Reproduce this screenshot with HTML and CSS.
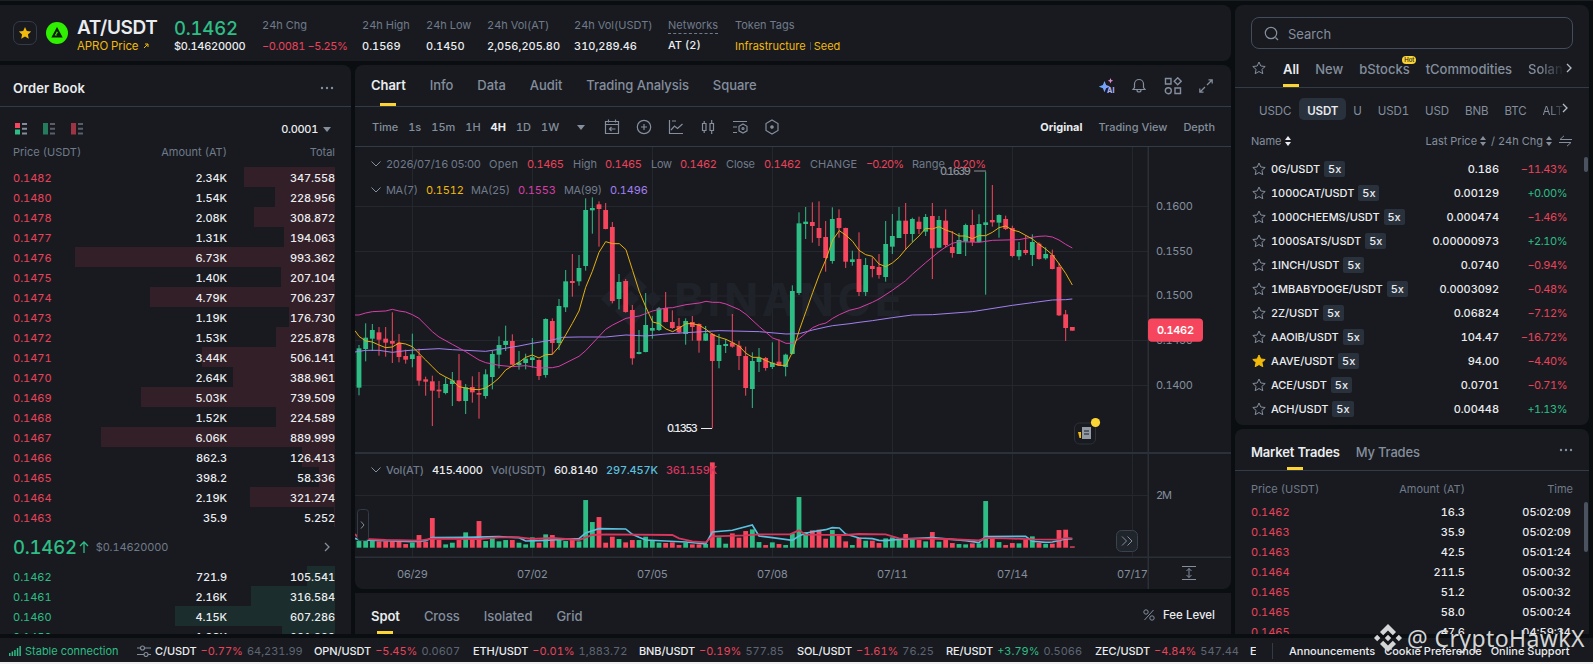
FILE: index.html
```html
<!DOCTYPE html>
<html lang="en">
<head>
    <meta charset="UTF-8">
    <meta name="viewport" content="width=device-width, initial-scale=1.0">
    <title>AT/USDT</title>
    <link rel="stylesheet" href="styles.css">
</head>
<body>

    <!-- Shared icons -->
    <svg class="sprite">
        <symbol id="star" viewBox="0 0 14 14">
            <path d="M7 1l1.8 4 4.4.5-3.3 2.9.9 4.3L7 10.500l-3.800 2.200.9-4.300L.8 5.500 5.200 5z"/>
        </symbol>
        <symbol id="sort" viewBox="0 0 6 10">
            <path d="M3 0L6 4H0zM3 10L0 6h6z"/>
        </symbol>
        <symbol id="right" viewBox="0 0 6 10">
            <path d="M1 1l4 4-4 4" fill="none" stroke="currentColor" stroke-width="1.3"/>
        </symbol>
    </svg>

    <main class="page">
        <div class="left">
            <header class="panel header">
                <div class="fav"><svg width="14" height="14"><use href="#star"/></svg></div>
                <svg class="coin" width="22" height="22" viewBox="0 0 22 22">
                    <circle cx="11" cy="11" r="11" fill="#2ff000"/>
                    <path d="M11 7l4 7.500H7z" fill="none" stroke="#0b1a05" stroke-width="2"/>
                    <circle cx="12" cy="12.500" r="1.500" fill="#0b1a05"/>
                </svg>
                <div class="pair">
                    <h1>AT/USDT</h1>
                    <a>APRO Price <svg width="6" height="6" viewBox="0 0 6 6"><path d="M1 5l4-4M2 1h3v3" fill="none" stroke="#f0b90b"/></svg></a>
                </div>
                <div class="stats">
                    <div><b class="big">0.1462</b><span class="usd">$0.14620000</span></div>
                    <div><i>24h Chg</i><span class="red thin">−0.0081 −5.25%</span></div>
                    <div><i>24h High</i><span>0.1569</span></div>
                    <div><i>24h Low</i><span>0.1450</span></div>
                    <div><i>24h Vol(AT)</i><span>2,056,205.80</span></div>
                    <div><i>24h Vol(USDT)</i><span>310,289.46</span></div>
                    <div><i class="dashed">Networks</i><span class="net">AT (2)</span></div>
                    <div><i>Token Tags</i><span class="tags">Infrastructure<em></em>Seed</span></div>
                </div>
            </header>

            <div class="row">
                <section class="panel book">
                    <div class="book-head">
                        <h2>Order Book</h2>
                        <svg width="14" height="4" viewBox="0 0 14 4" fill="#848e9c"><circle cx="2" cy="2" r="1.200"/><circle cx="7" cy="2" r="1.200"/><circle cx="12" cy="2" r="1.200"/></svg>
                    </div>
                    <div class="book-tools">
                        <svg width="12" height="12" viewBox="0 0 12 12"><path d="M0 0h5v5H0z" fill="#f6465d"/><path d="M0 6.500h5v5H0z" fill="#2ebd85"/><path d="M7 0h5v2H7zM7 4.800h5v2H7zM7 9.500h5v2H7z" fill="#848e9c"/></svg>
                        <svg width="12" height="12" viewBox="0 0 12 12" opacity=".6"><path d="M0 0h5v11.500H0z" fill="#2ebd85"/><path d="M7 0h5v2H7zM7 4.800h5v2H7zM7 9.500h5v2H7z" fill="#848e9c"/></svg>
                        <svg width="12" height="12" viewBox="0 0 12 12" opacity=".6"><path d="M0 0h5v11.500H0z" fill="#f6465d"/><path d="M7 0h5v2H7zM7 4.800h5v2H7zM7 9.500h5v2H7z" fill="#848e9c"/></svg>
                        <span class="step">0.0001</span>
                        <svg width="8" height="5" viewBox="0 0 8 5"><path d="M0 0h8L4 5z" fill="#848e9c"/></svg>
                    </div>
                    <div class="book-cols"><span>Price (USDT)</span><span>Amount (AT)</span><span>Total</span></div>
                    <div id="asks"></div>
                    <div class="last">
                        <b>0.1462</b>
                        <svg width="10" height="12" viewBox="0 0 10 12"><path d="M5 12V1M1 5l4-4 4 4" fill="none" stroke="#2ebd85" stroke-width="1.300"/></svg>
                        <span>$0.14620000</span>
                        <svg class="go" width="6" height="10"><use href="#right"/></svg>
                    </div>
                    <div id="bids"></div>
                </section>

                <div class="center">
                    <section class="panel chart">
                        <nav class="tabs chart-tabs">
                            <a class="on">Chart</a><a>Info</a><a>Data</a><a>Audit</a><a>Trading Analysis</a><a>Square</a>
                            <div class="tab-icons">
                                <svg width="16" height="16" viewBox="0 0 16 16">
                                    <defs><linearGradient id="ai" x2="1" y2="0"><stop offset="0" stop-color="#55a9ff"/><stop offset="1" stop-color="#9a9cf5"/></linearGradient></defs>
                                    <path d="M5.500 3l1.600 4 4 1.600-4 1.600-1.600 4-1.600-4-4-1.600 4-1.600z" fill="url(#ai)"/>
                                    <path d="M11.500 0l.8 2 2 .8-2 .8-.8 2-.8-2-2-.8 2-.8z" fill="#e08bd0"/>
                                    <text x="8" y="15" font-size="7" font-weight="800" fill="#a9b0f5">AI</text>
                                </svg>
                                <svg width="14" height="16" viewBox="0 0 14 16" fill="none" stroke="#848e9c" stroke-width="1.200"><path d="M1 11.500h12l-1.500-2V6a4.500 4.500 0 0 0-9 0v3.500zM5 12a2 2 0 0 0 4 0"/></svg>
                                <svg width="18" height="18" viewBox="0 0 18 18" fill="none" stroke="#848e9c" stroke-width="1.400"><path d="M1.500 1.500h5.500V7H1.500zM11 11h5.500v5.500H11zM13.700.8l3.500 3.500-3.500 3.500-3.500-3.500z"/><circle cx="4.300" cy="13.700" r="3"/></svg>
                                <svg width="14" height="14" viewBox="0 0 14 14" fill="none" stroke="#848e9c" stroke-width="1.200" stroke-dasharray="none"><path d="M8 6l5-5M9.500.8h3.700v3.700M6 8l-5 5M4.500 13.200H.8V9.500"/></svg>
                            </div>
                        </nav>
                        <div class="toolbar">
                            <span>Time</span><span>1s</span><span>15m</span><span>1H</span><span class="on">4H</span><span>1D</span><span>1W</span>
                            <svg class="caret" width="8" height="5" viewBox="0 0 8 5"><path d="M0 0h8L4 5z" fill="#848e9c"/></svg>
                            <div class="tools">
                                <svg width="16" height="16" viewBox="0 0 16 16"><path d="M1.500 2.500h13v12h-13zM1.500 5.500h13M4.500.5v3M11.500.5v3M11.500 10h-6M7.500 8l-2 2 2 2"/></svg>
                                <svg width="16" height="16" viewBox="0 0 16 16"><circle cx="8" cy="8" r="6.700"/><path d="M8 5v6M5 8h6"/></svg>
                                <svg width="16" height="16" viewBox="0 0 16 16"><path d="M1.500 1v13.500H15M3 11l3.500-4 3 2.500L14.500 5M4 2h4"/></svg>
                                <svg width="16" height="16" viewBox="0 0 16 16"><path d="M2.500 4.500h3.500v7H2.500zM10 4.500h3.500v7H10zM4.200 2v2.500M4.200 11.500V14M11.700 1v3.500M11.700 11.500V15"/></svg>
                                <svg width="16" height="16" viewBox="0 0 16 16"><path d="M1 2.500h14M1 8h4M1 13.500h4M11 5l4 2.300v4.500L11 14l-4-2.200V7.300z"/><circle cx="11" cy="9.500" r="1"/></svg>
                                <svg width="16" height="16" viewBox="0 0 16 16"><path d="M8 1l6 3.500v7L8 15l-6-3.500v-7z"/><circle cx="8" cy="8" r="1.200" fill="#848e9c"/></svg>
                            </div>
                            <span class="on view">Original</span><span class="view">Trading View</span><span class="view">Depth</span>
                        </div>
                        <svg id="plot" width="876" height="442" viewBox="355 147 876 442"></svg>
                    </section>

                    <section class="panel order">
                        <nav class="tabs">
                            <a class="on">Spot</a><a>Cross</a><a>Isolated</a><a>Grid</a>
                            <div class="fee">
                                <svg width="12" height="12" viewBox="0 0 12 12" fill="none" stroke="#848e9c"><circle cx="3" cy="3" r="2.200"/><circle cx="9" cy="9" r="2.200"/><path d="M10.500 1l-9 10"/></svg>
                                <span>Fee Level</span>
                            </div>
                        </nav>
                    </section>
                </div>
            </div>
        </div>

        <aside class="right">
            <section class="panel market">
                <div class="search">
                    <svg width="16" height="16" viewBox="0 0 16 16" fill="none" stroke="#848e9c" stroke-width="1.200"><circle cx="7" cy="7" r="5.700"/><path d="M11.500 11.500L14 14"/></svg>
                    <span>Search</span>
                </div>
                <nav class="cats">
                    <svg class="outline" width="14" height="14"><use href="#star"/></svg>
                    <a class="on">All</a><a>New</a><a>bStocks<sup>Hot</sup></a><a>tCommodities</a><a class="fade">Solana</a>
                    <svg class="more" width="6" height="10"><use href="#right"/></svg>
                </nav>
                <nav class="quotes">
                    <a>USDC</a><a class="on">USDT</a><a>U</a><a>USD1</a><a>USD</a><a>BNB</a><a>BTC</a><a class="fade">ALTS</a>
                    <svg class="more" width="6" height="10"><use href="#right"/></svg>
                </nav>
                <div class="market-cols">
                    <span>Name</span><svg class="white" width="6" height="10"><use href="#sort"/></svg>
                    <span class="lp">Last Price</span><svg width="6" height="10"><use href="#sort"/></svg>
                    <span class="chg">/ 24h Chg</span><svg width="6" height="10"><use href="#sort"/></svg>
                    <svg class="swap" width="13" height="12" viewBox="0 0 13 12" fill="none" stroke="#848e9c"><path d="M13 4.500H1L5 .8M0 7.500h12L8 11.200"/></svg>
                </div>
                <div id="pairs"></div>
                <div class="bar bar-market"></div>
            </section>

            <section class="panel trades">
                <nav class="tabs trade-tabs">
                    <a class="on">Market Trades</a><a>My Trades</a>
                    <svg class="dots" width="14" height="4" viewBox="0 0 14 4" fill="#848e9c"><circle cx="2" cy="2" r="1.200"/><circle cx="7" cy="2" r="1.200"/><circle cx="12" cy="2" r="1.200"/></svg>
                </nav>
                <div class="trade-row trade-cols"><span>Price (USDT)</span><span>Amount (AT)</span><span>Time</span></div>
                <div id="trades"></div>
                <div class="bar bar-trades"></div>
            </section>
        </aside>
    </main>

    <footer class="footer">
        <svg width="12" height="10" viewBox="0 0 12 10" fill="#2ebd85"><path d="M0 7h1.500v3H0zM2.600 5.500h1.500V10H2.600zM5.200 4h1.500v6H5.200zM7.800 2h1.500v8H7.800zM10.400 0h1.500v10h-1.500z"/></svg>
        <span class="stable">Stable connection</span>
        <svg class="sliders" width="14" height="12" viewBox="0 0 14 12" fill="none" stroke="#848e9c" stroke-width="1.100"><path d="M0 3h3.500M7.500 3H14M0 9.500h7M11 9.500h3"/><circle cx="5.500" cy="3" r="2"/><circle cx="9" cy="9.500" r="2"/></svg>
        <div class="ticker" id="ticker"></div>
        <div class="links"><a>Announcements</a><a>Cookie Preference</a><a>Online Support</a></div>
    </footer>

    <div class="handle">
        <svg width="28" height="28" viewBox="0 0 28 28"><path d="M14 0l8 8-3.200 3.200L14 6.400l-4.800 4.800L6 8zM3.200 10.800L6.400 14l-3.200 3.200L0 14zM14 10.800l3.200 3.200-3.200 3.200-3.200-3.200zM24.800 10.800L28 14l-3.200 3.200-3.200-3.200zM14 28l-8-8 3.200-3.200 4.800 4.800 4.800-4.800L22 20z" fill="#d4d5d6"/></svg>
        <span>@ CryptoHawkX</span>
    </div>

    <script src="script.js"></script>
</body>
</html>
```
FILE: styles.css
```css
* {
    box-sizing: border-box;
}

body {
    margin: 0;
    height: 664px;
    overflow: hidden;
    background: #0b0e11;
    border-top: 1px solid #1a2024;
    font-family: Inter, "Liberation Sans", sans-serif;
    font-size: 11px;
    font-variant-numeric: tabular-nums;
    line-height: 16px;
    color: #eaecef;
    position: relative;
}

svg {
    display: block;
    flex: none;
}

.sprite {
    position: absolute;
    width: 0;
    height: 0;
}

a, i {
    font-style: normal;
}

.page {
    display: flex;
    gap: 4px;
    height: 633px;
    padding-top: 4px;
}

.left {
    width: 1231px;
    display: flex;
    flex-direction: column;
    gap: 4px;
}

.row {
    flex: 1;
    display: flex;
    gap: 4px;
    min-height: 0;
}

.panel {
    background: #181a20;
    border-radius: 8px;
    overflow: hidden;
    position: relative;
}

.red { color: #e8435a; }
.green { color: #2ebd85; }

/* Header */
.header {
    height: 56px;
    display: flex;
    align-items: center;
    padding-left: 13px;
    border-radius: 0 8px 8px 0;
}

.fav {
    width: 24px;
    height: 24px;
    border: 1px solid #333b47;
    border-radius: 7px;
    display: flex;
    align-items: center;
    justify-content: center;
    fill: #f0b90b;
}

.coin {
    margin-left: 9px;
}

.pair {
    width: 98px;
    margin-left: 9px;
    padding-top: 5px;
}

.pair h1 {
    margin: 0;
    font-size: 19px;
    font-weight: 600;
    line-height: 20px;
    letter-spacing: -0.35px;
}

.pair a {
    display: flex;
    align-items: center;
    gap: 5px;
    font-size: 11.5px;
    letter-spacing: -0.1px;
    color: #f0b90b;
}

.stats {
    display: grid;
    grid-template-columns: 88px 100px 64px 61px 87px 94px 67px auto;
    margin-left: -1px;
    padding-top: 4px;
}

.stats div > * {
    display: block;
    height: 21px;
}

.stats i {
    color: #707a8a;
}

.stats span {
    font-weight: 500;
    height: 16px;
}

.stats .thin {
    font-weight: 400;
    letter-spacing: -0.4px;
}

.stats .usd {
    letter-spacing: -0.25px;
}

.stats .big {
    color: #2ebd85;
    font-size: 18.5px;
    font-weight: 500;
    line-height: 22px;
    letter-spacing: -0.2px;
}

.stats .dashed {
    height: 17px;
    width: 50px;
    border-bottom: 1px dashed #707a8a;
}

.stats .net {
    margin-top: 3px;
}

.stats .tags {
    color: #f0b90b;
    font-weight: 400;
    display: flex;
    align-items: center;
}

.tags em {
    width: 1px;
    height: 8px;
    margin: 0 3px 0 4px;
    background: #474d57;
}

/* Order book */
.book {
    width: 351px;
    border-radius: 0 8px 0 0;
}

.book-head {
    height: 42px;
    border-bottom: 1px solid #333b47;
    padding: 5px 17px 0 13px;
    display: flex;
    align-items: center;
    justify-content: space-between;
}

.book-head h2 {
    margin: 0;
    font-size: 13px;
    font-weight: 600;
    letter-spacing: 0.1px;
}

.book-tools {
    display: flex;
    align-items: center;
    height: 44px;
    padding: 0 20px 0 15px;
    gap: 16px;
}

.step {
    margin: 0 -11px 0 auto;
    font-weight: 500;
    letter-spacing: -0.3px;
}

.book-cols {
    height: 16px;
    margin: -7px 0 7px;
    padding: 0 16px 0 13px;
    color: #707a8a;
    display: grid;
    grid-template-columns: 107px 107px 1fr;
}

.book-cols span + span,
.book-row span + span {
    text-align: right;
}

.book-row {
    position: relative;
    height: 20px;
    line-height: 22px;
    margin: 0 16px 0 13px;
    display: grid;
    grid-template-columns: 107px 107px 1fr;
}

.book-row u {
    position: absolute;
    right: 0;
    top: 0;
    height: 20px;
}

.book-row span {
    position: relative;
    font-weight: 500;
    letter-spacing: -0.1px;
}

.book-row .red,
.book-row .green {
    font-weight: 400;
    letter-spacing: 0;
}

#asks u { background: rgba(246, 70, 93, 0.12); }
#bids u { background: rgba(46, 189, 133, 0.12); }

.last {
    height: 39px;
    display: flex;
    align-items: center;
    padding: 1px 21px 0 13px;
}

.last b {
    color: #2ebd85;
    font-size: 18.5px;
    font-weight: 500;
    letter-spacing: -0.2px;
    margin-right: 2px;
}

.last span {
    margin-left: 7px;
    color: #707a8a;
    letter-spacing: -0.15px;
}

.go {
    color: #848e9c;
    margin-left: auto;
}

/* Center column */
.center {
    width: 876px;
    display: flex;
    flex-direction: column;
    gap: 4px;
}

.chart {
    height: 524px;
}

.tabs {
    height: 42px;
    display: flex;
    gap: 24px;
    padding: 0 16px;
    border-bottom: 1px solid #333b47;
    font-size: 13px;
    font-weight: 500;
    line-height: 42px;
    color: #848e9c;
}

.tabs a {
    position: relative;
    letter-spacing: -0.05px;
}

.chart-tabs {
    line-height: 41px;
}

.tabs .on,
.cats .on {
    color: #eaecef;
    font-weight: 600;
}

.tabs .on::after,
.cats .on::after {
    content: "";
    position: absolute;
    left: 50%;
    bottom: 0;
    width: 16px;
    height: 3px;
    margin-left: -8px;
    background: #fcd535;
}

.tab-icons {
    margin: 0 2px 0 auto;
    display: flex;
    align-items: center;
    gap: 17.5px;
}

.toolbar {
    height: 40px;
    padding: 1px 16px 0 17px;
    border-bottom: 1px solid #333b47;
    display: flex;
    align-items: center;
    gap: 10px;
    color: #848e9c;
    font-weight: 500;
}

.toolbar .on {
    color: #eaecef;
    font-weight: 700;
}

.caret {
    margin-left: 8px;
}

.tools {
    display: flex;
    gap: 16px;
    margin: 0 auto 0 9px;
    fill: none;
    stroke: #848e9c;
    stroke-width: 1.2;
}

.view {
    margin-left: 6px;
}

#plot text {
    font-size: 11px;
    fill: #707a8a;
}

.order {
    flex: 1;
    border-radius: 0;
}

.order .tabs {
    border: 0;
    line-height: 47px;
}

.order .tabs .on::after {
    bottom: 1px;
}

.fee {
    margin-left: auto;
    display: flex;
    align-items: center;
    gap: 8px;
    font-size: 11.5px;
    color: #eaecef;
    padding-top: 2px;
}

/* Markets */
.right {
    width: 354px;
    display: flex;
    flex-direction: column;
    gap: 4px;
}

.market {
    height: 420px;
}

.search {
    height: 32px;
    margin: 12px 16px 0;
    border: 1px solid #434c5a;
    border-radius: 8px;
    display: flex;
    align-items: center;
    gap: 8px;
    padding: 2px 0 0 12px;
    font-size: 13px;
    color: #848e9c;
}

.cats {
    position: relative;
    height: 39px;
    border-bottom: 1px solid #333b47;
    display: flex;
    gap: 16px;
    padding-left: 17px;
    font-size: 13px;
    font-weight: 500;
    line-height: 41px;
    color: #848e9c;
}

.cats a {
    position: relative;
}

.outline {
    fill: none;
    stroke: #848e9c;
    margin: 12px 1px 0 0;
}

.cats sup {
    position: absolute;
    left: 43px;
    top: 7px;
    width: 14px;
    height: 8px;
    border-radius: 4px;
    background: #fcd535;
    color: #181a20;
    font-size: 6px;
    line-height: 8px;
    text-align: center;
}

.fade {
    width: 36px;
    overflow: hidden;
    -webkit-mask-image: linear-gradient(90deg, #000 30%, transparent);
    mask-image: linear-gradient(90deg, #000 30%, transparent);
}

.quotes .fade {
    width: 22px;
}

.more {
    position: absolute;
    right: 17px;
    top: 14px;
    color: #b7bdc6;
}

.quotes {
    position: relative;
    height: 22px;
    margin-top: 10px;
    padding-left: 24px;
    display: flex;
    font-size: 11.5px;
    letter-spacing: -0.1px;
    line-height: 26px;
    color: #848e9c;
}

.quotes a {
    margin-right: 16px;
}

.quotes .on {
    margin: 0 7px 0 -8px;
    padding: 0 8px;
    background: #29313d;
    border-radius: 5px;
    color: #eaecef;
    font-weight: 600;
}

.quotes .more {
    top: 5px;
    right: 21px;
}

.market-cols {
    height: 37px;
    padding: 5px 17px 0 16px;
    display: flex;
    align-items: center;
    gap: 3px;
    color: #848e9c;
    fill: #848e9c;
}

.white {
    fill: #eaecef;
}

.lp {
    margin-left: auto;
}

.chg {
    margin-left: 2px;
}

.swap {
    margin-left: 4px;
}

.pair-row {
    height: 24px;
    display: flex;
    align-items: center;
    padding: 0 22px 0 17px;
    font-weight: 500;
    letter-spacing: -0.05px;
}

.pair-row svg {
    fill: none;
    stroke: #848e9c;
    margin-right: 5px;
}

.pair-row .fill {
    fill: #f0b90b;
    stroke: #f0b90b;
}

.pair-row em {
    height: 16px;
    margin-left: 4px;
    padding: 0 4px;
    border-radius: 2px;
    background: #29313d;
    font-style: normal;
}

.pair-row b {
    margin-left: auto;
    font-weight: 500;
}

.pair-row u {
    width: 68px;
    text-align: right;
    text-decoration: none;
    font-weight: 400;
    letter-spacing: -0.45px;
}

.bar {
    position: absolute;
    right: 1px;
    width: 4px;
    border-radius: 2px;
    background: #4c5360;
}

.bar-market {
    top: 152px;
    height: 15px;
}

.bar-trades {
    top: 73px;
    height: 50px;
}

/* Trades */
.trades {
    flex: 1;
    border-radius: 8px 8px 0 0;
}

.trade-tabs {
    gap: 16px;
    line-height: 47px;
}

.trade-tabs a {
    letter-spacing: -0.18px;
}

.dots {
    margin: 19px 0 0 auto;
}

.trade-row {
    height: 20px;
    line-height: 20px;
    padding: 0 18px 0 16px;
    display: grid;
    grid-template-columns: 107px 107px 1fr;
    font-weight: 500;
}

.trade-row span + span {
    text-align: right;
}

.trade-row .red {
    font-weight: 400;
}

.trade-cols {
    height: 31px;
    padding-top: 8px;
    padding-right: 16px;
    color: #707a8a;
    font-weight: 400;
}

/* Footer */
.footer {
    position: absolute;
    top: 637px;
    left: 0;
    width: 1593px;
    height: 26px;
    padding: 2px 0 0 9px;
    background: #181a20;
    border-bottom: 2px solid #f0f0f0;
    display: flex;
    align-items: center;
}

.stable {
    width: 94px;
    margin: 0 18px 0 4px;
    color: #2ebd85;
    white-space: nowrap;
}

.ticker {
    width: 1101px;
    margin-left: 4px;
    display: flex;
    overflow: hidden;
    white-space: nowrap;
}

.tick {
    flex: none;
    display: flex;
    gap: 4px;
}

.tick b {
    font-weight: 500;
    letter-spacing: -0.1px;
}

.tick em {
    font-style: normal;
    color: #5e6673;
}

.links {
    height: 16px;
    margin-left: 16px;
    padding-left: 16px;
    border-left: 1px solid #333b47;
    display: flex;
    gap: 9px;
    font-weight: 500;
    white-space: nowrap;
}

/* Account handle */
.handle {
    position: absolute;
    left: 1374px;
    top: 623px;
    display: flex;
    align-items: center;
    gap: 5px;
    font-family: "Noto Sans", sans-serif;
    font-size: 23px;
    letter-spacing: 0.4px;
    line-height: 28px;
    color: #d4d5d6;
    white-space: nowrap;
}
```
FILE: script.js
```javascript
// price, amount, total, depth bar width
const asks = [
    ["0.1482", "2.34K", "347.558", 90.7], ["0.1480", "1.54K", "228.956", 59.7],
    ["0.1478", "2.08K", "308.872", 80.7], ["0.1477", "1.31K", "194.063", 51],
    ["0.1476", "6.73K", "993.362", 259.7], ["0.1475", "1.40K", "207.104", 54],
    ["0.1474", "4.79K", "706.237", 184.7], ["0.1473", "1.19K", "176.730", 46],
    ["0.1472", "1.53K", "225.878", 59], ["0.1471", "3.44K", "506.141", 132.7],
    ["0.1470", "2.64K", "388.961", 102], ["0.1469", "5.03K", "739.509", 194],
    ["0.1468", "1.52K", "224.589", 59], ["0.1467", "6.06K", "889.999", 234],
    ["0.1466", "862.3", "126.413", 33], ["0.1465", "398.2", "58.336", 15.7],
    ["0.1464", "2.19K", "321.274", 84.7], ["0.1463", "35.9", "5.252", 1]
];
const bids = [
    ["0.1462", "721.9", "105.541", 28], ["0.1461", "2.16K", "316.584", 83.7],
    ["0.1460", "4.15K", "607.286", 160], ["0.1459", "1.38K", "201.393", 53]
];

function fillBook(id, rows, cls) {
    document.getElementById(id).innerHTML = rows.map(r =>
        `<div class="book-row"><u style="width:${r[3]}px"></u><span class="${cls}">${r[0]}</span><span>${r[1]}</span><span>${r[2]}</span></div>`
    ).join("");
}
fillBook("asks", asks, "red");
fillBook("bids", bids, "green");

const color = v => v[0] === "+" ? "green" : "red";

const pairs = [
    ["0G/USDT", "0.186", "−11.43%"], ["1000CAT/USDT", "0.00129", "+0.00%"],
    ["1000CHEEMS/USDT", "0.000474", "−1.46%"], ["1000SATS/USDT", "0.00000973", "+2.10%"],
    ["1INCH/USDT", "0.0740", "−0.94%"], ["1MBABYDOGE/USDT", "0.0003092", "−0.48%"],
    ["2Z/USDT", "0.06824", "−7.12%"], ["AAOIB/USDT", "104.47", "−16.72%"],
    ["AAVE/USDT", "94.00", "−4.40%"], ["ACE/USDT", "0.0701", "−0.71%"],
    ["ACH/USDT", "0.00448", "+1.13%"], ["ACM/USDT", "0.352", "−0.28%"]
];
document.getElementById("pairs").innerHTML = pairs.map(p =>
    `<div class="pair-row"><svg class="${p[0] === "AAVE/USDT" ? "fill" : ""}" width="14" height="14"><use href="#star"/></svg>${p[0]}<em>5x</em><b>${p[1]}</b><u class="${color(p[2])}">${p[2]}</u></div>`
).join("");

const trades = [
    ["0.1462", "16.3", "05:02:09"], ["0.1463", "35.9", "05:02:09"],
    ["0.1463", "42.5", "05:01:24"], ["0.1464", "211.5", "05:00:32"],
    ["0.1465", "51.2", "05:00:32"], ["0.1465", "58.0", "05:00:24"],
    ["0.1465", "47.6", "04:59:34"]
];
document.getElementById("trades").innerHTML = trades.map(t =>
    `<div class="trade-row"><span class="red">${t[0]}</span><span>${t[1]}</span><span>${t[2]}</span></div>`
).join("");

// last value is the slot width
const ticks = [
    ["C/USDT", "−0.77%", "64,231.99", 159], ["OPN/USDT", "−5.45%", "0.0607", 159],
    ["ETH/USDT", "−0.01%", "1,883.72", 166], ["BNB/USDT", "−0.19%", "577.85", 158],
    ["SOL/USDT", "−1.61%", "76.25", 149], ["RE/USDT", "+3.79%", "0.5066", 149],
    ["ZEC/USDT", "−4.84%", "547.44", 155], ["E", "", "", 6]
];
document.getElementById("ticker").innerHTML = ticks.map(t =>
    `<div class="tick" style="width:${t[3]}px"><b>${t[0]}</b><span class="${color(t[1])}">${t[1]}</span><em>${t[2]}</em></div>`
).join("");

// [up, high, body top, body bottom, low, volume], three units per pixel
const candles = [
    [1,495,505,623,646,20],[1,430,473,507,544,20],[1,432,450,476,513,20],[0,441,457,479,527,19],
    [0,441,476,488,530,19],[0,397,483,491,549,19],[0,462,488,531,547,19],[0,509,528,539,551,11],
    [1,461,523,537,562,15],[0,506,528,602,617,38],[0,590,598,605,647,18],[0,587,604,632,738,89],
    [0,603,629,634,654,23],[1,592,612,639,643,10],[1,576,601,612,678,15],[0,522,601,663,665,23],
    [1,612,622,663,702,46],[0,589,621,637,668,28],[0,576,639,644,716,80],[1,568,583,648,656,20],
    [1,513,522,591,628,28],[1,469,495,524,565,19],[1,437,483,495,513,23],[0,463,483,554,556,23],
    [1,513,548,555,569,15],[1,521,536,549,568,10],[1,474,532,540,563,31],[0,538,540,588,600,15],
    [1,415,417,585,593,40],[0,415,423,489,524,38],[1,357,378,489,510,23],[1,270,304,382,396,20],
    [0,222,303,309,350,23],[1,225,264,304,317,19],[1,55,90,258,272,143],[1,52,84,91,161,77],
    [0,64,73,87,200,92],[0,69,90,147,148,15],[0,126,141,363,370,33],[1,282,306,357,388,26],
    [0,297,303,396,398,16],[0,375,390,535,554,23],[1,450,516,522,523,23],[1,339,435,516,517,33],
    [1,408,444,452,476,23],[1,381,385,450,453,15],[0,336,384,426,427,14],[0,391,426,444,447,16],
    [0,414,438,457,460,8],[1,415,423,462,494,15],[0,408,426,441,482,10],[0,430,432,482,518,10],
    [1,438,460,482,483,11],[0,459,462,543,745,256],[1,462,495,543,565,31],[1,477,492,498,519,12],
    [0,402,488,500,503,43],[0,483,497,528,570,30],[0,500,528,624,647,50],[1,517,543,627,684,55],
    [1,504,533,546,576,17],[0,531,534,564,572,8],[1,487,548,561,567,16],[0,478,545,557,558,11],
    [1,521,524,561,589,8],[1,316,333,522,523,43],[1,97,130,339,345,152],[1,81,125,132,177,47],
    [0,67,126,138,188,52],[0,64,144,174,198,54],[0,123,171,234,275,27],[1,82,117,243,251,53],
    [0,88,114,144,173,35],[0,143,144,245,264,19],[1,212,238,246,257,8],[0,157,237,336,348,30],
    [1,234,255,336,348,21],[0,232,258,267,292,21],[0,222,261,285,296,14],[1,123,192,291,305,28],
    [1,102,168,200,222,31],[1,81,122,174,174,25],[0,69,122,162,210,41],[1,113,117,162,187,25],
    [0,110,125,147,162,23],[1,102,111,155,168,19],[0,69,108,205,297,47],[1,108,120,203,204,18],
    [0,88,122,195,203,25],[0,153,201,219,233,14],[1,159,180,222,222,11],[1,131,135,185,228,10],
    [0,89,135,186,198,13],[1,103,132,186,187,13],[1,-25,127,135,344,140],[0,15,120,127,140,28],
    [1,103,105,128,173,17],[0,107,117,147,150,8],[0,137,144,228,232,14],[1,186,210,229,240,13],
    [0,165,210,219,225,24],[1,163,186,225,258,34],[0,187,191,237,239,14],[1,202,222,235,239,11],
    [0,209,225,267,268,12],[0,249,261,406,408,53],[0,390,403,444,483,54],[0,441,441,452,452,4]
];

const ma7 = "15,452 27,469 47,483 67,486 87,495 107,503 127,501 147,489 167,492 187,500 207,520 227,540 247,560 267,580 287,591 307,601 327,620 347,624 367,628 387,629 407,624 427,611 447,594 467,570 487,558 507,547 527,532 547,525 567,534 587,524 607,523 627,500 647,465 667,430 687,393 707,322 727,274 747,217 767,185 788,191 808,191 828,209 848,272 868,335 888,382 908,426 928,431 948,447 968,455 988,444 1008,431 1028,431 1048,436 1068,448 1088,464 1108,472 1128,478 1148,488 1168,499 1188,520 1208,532 1228,532 1248,542 1268,550 1288,556 1308,556 1328,515 1348,450 1368,394 1388,338 1408,284 1428,238 1448,180 1468,152 1488,166 1508,184 1527,211 1547,224 1567,229 1587,252 1607,260 1627,249 1647,232 1667,208 1687,187 1707,168 1727,145 1747,147 1767,140 1787,150 1807,157 1827,168 1847,168 1867,176 1887,167 1907,167 1927,157 1947,143 1967,138 1987,150 2007,155 2027,166 2047,177 2067,193 2087,207 2107,224 2127,251 2147,280 2167,315";
const ma25 = "15,405 27,405 47,399 67,395 107,393 127,388 147,393 167,396 187,404 207,415 247,455 267,471 307,493 347,515 387,540 407,548 447,556 487,560 527,557 567,564 607,563 627,559 687,529 707,512 767,448 788,435 828,415 868,408 908,393 948,384 968,383 1008,374 1048,369 1068,364 1088,367 1108,367 1128,372 1168,389 1188,403 1228,440 1268,474 1288,481 1308,490 1328,490 1348,475 1388,443 1408,434 1428,429 1448,415 1468,404 1498,391 1527,384 1567,367 1587,357 1627,331 1667,302 1687,283 1727,248 1767,215 1787,201 1807,190 1827,185 1887,187 1927,181 2007,179 2027,175 2067,169 2087,168 2107,171 2127,180 2147,193 2167,204";
const ma99 = "15,516 47,511 87,511 127,517 167,512 207,509 267,506 307,509 407,514 447,508 507,498 547,490 607,480 637,472 687,471 767,471 828,465 888,468 948,462 1008,458 1108,452 1228,455 1308,462 1348,461 1388,450 1428,441 1448,437 1500,431 1527,427 1567,422 1627,413 1687,405 1747,404 1867,395 1987,376 2047,368 2107,360 2147,359 2167,357";
const volA = "15,655 27,660 107,662 187,665 227,662 247,653 347,652 447,650 507,653 527,663 567,662 607,660 687,656 707,639 727,632 747,626 827,627 847,643 867,652 887,660 947,663 1007,666 1067,672 1087,636 1147,631 1207,615 1227,648 1267,653 1327,661 1347,648 1367,640 1387,635 1427,629 1447,623 1468,624 1487,642 1527,654 1567,656 1587,661 1607,662 1647,658 1747,653 1847,662 1887,668 1907,650 2027,649 2047,664 2087,667 2107,666 2147,657 2167,657";
const volB = "15,642 27,656 107,660 207,662 247,656 387,657 447,652 507,652 547,657 607,654 687,660 727,645 767,643 967,645 987,655 1027,664 1067,667 1087,649 1187,646 1227,643 1320,643 1347,631 1367,644 1487,645 1527,642 1607,643 1647,655 1727,656 1787,657 1887,661 1907,654 1967,655 2047,658 2127,659 2147,654 2167,655";

const line = (pts, y, stroke, w) =>
    `<polyline points="${pts}" transform="translate(350 ${y}) scale(.33333)" fill="none" stroke="${stroke}" stroke-width="${w * 3}"/>`;
const rect = (x, y, w, h, fill) => `<rect x="${x}" y="${y}" width="${w}" height="${h}" fill="${fill}"/>`;
const text = (x, y, len, str, fill, extra = "") =>
    `<text x="${x}" y="${y + 4}" textLength="${len}" style="fill:${fill}" ${extra}>${str}</text>`;

let svg = "";

// Grid
[412, 532, 652, 772, 892, 1012, 1132].forEach(x => svg += rect(x, 147, 1, 410, "#24272d"));
[206, 251, 295.5, 340, 385, 495].forEach(y => svg += rect(355, y, 793, 1, "#24272d"));

// Watermark
svg += `<g fill="#1f2329"><path d="M631 271l16 16-7 7-9-9-9 9-7-7zM609 291l8 8-8 8-8-8zM631 291l8 8-8 8-8-8zM653 291l8 8-8 8-8-8zM631 327l-16-16 7-7 9 9 9-9 7 7z"/>
<text x="674" y="316" textLength="228" style="font-size:45px;font-weight:700;fill:#1f2329">BINANCE</text></g>`;

candles.forEach((c, i) => {
    const x = 359 + i * 20 / 3;
    const fill = c[0] ? "#2ebd85" : "#f6465d";
    svg += rect(x - 0.5, 180 + c[1] / 3, 1, (c[4] - c[1]) / 3, fill);
    svg += rect(x - 2.4, 180 + c[2] / 3, 4.8, Math.max((c[3] - c[2]) / 3, 1), fill);
    svg += rect(x - 2.4, 547.7 - c[5] / 3, 4.8, c[5] / 3, fill);
});
svg += line(ma99, 180, "#a37ff0", 1) + line(ma25, 180, "#d63ea6", 1) + line(ma7, 180, "#e5b00e", 1);
svg += line(volA, 320, "#5bc0de", 1.6) + line(volB, 320, "#d9365e", 1.8);

// Frame
svg += rect(355, 452, 876, 2, "#2b313b") + rect(355, 556.5, 876, 1.5, "#2b2f36") + rect(1147.5, 147, 1.5, 442, "#2b2f36");

// High and low marks
svg += text(940, 171, 31, "0.1639", "#8d9199", 'font-weight="500"') + rect(974, 170.5, 12, 1, "#8d9199");
svg += text(667, 428, 31, "0.1353", "#eaecef", 'font-weight="500"') + rect(701, 428, 11, 1, "#eaecef");

// Legends
[164, 190, 470].forEach(y => svg += `<path d="M371.500 ${y - 2.5}l4.500 4.500 4.500-4.500" fill="none" stroke="#848e9c"/>`);
const gray = "#707a8a", red = "#e8435a";
[
    [386, 95, "2026/07/16 05:00", gray], [489, 29, "Open", gray], [527, 37, "0.1465", red],
    [573, 24, "High", gray], [605, 37, "0.1465", red], [651, 21, "Low", gray], [680, 37, "0.1462", red],
    [726, 29, "Close", gray], [764, 37, "0.1462", red], [810, 47, "CHANGE", gray], [866, 38, "−0.20%", red],
    [912, 33, "Range", gray], [953, 33, "0.20%", red]
].forEach(t => svg += text(t[0], 164, t[1], t[2], t[3]));
[
    [386, 32, "MA(7)", gray], [426, 38, "0.1512", "#f0b90b"], [471, 39, "MA(25)", gray],
    [518, 38, "0.1553", "#d63ea6"], [564, 38, "MA(99)", gray], [610, 38, "0.1496", "#a37ff0"]
].forEach(t => svg += text(t[0], 190, t[1], t[2], t[3]));
[
    [386, 38, "Vol(AT)", gray], [432, 51, "415.4000", "#eaecef"], [491, 55, "Vol(USDT)", gray],
    [554, 44, "60.8140", "#eaecef"], [606, 52, "297.457K", "#5bc0de"], [666, 51, "361.159K", "#d9365e"]
].forEach(t => svg += text(t[0], 470, t[1], t[2], t[3], 'font-weight="500"'));

// Axes
[["0.1600", 206], ["0.1550", 251], ["0.1500", 295], ["0.1450", 340], ["0.1400", 385]].forEach(a =>
    svg += text(1156, a[1], 37, a[0], "#848e9c"));
svg += text(1156, 495, 16, "2M", "#848e9c");
["06/29", "07/02", "07/05", "07/08", "07/11", "07/14", "07/17"].forEach((d, i) =>
    svg += text(397 + i * 120, 574, 31, d, "#848e9c"));
svg += `<rect x="1148" y="318.500" width="55" height="23.300" rx="4" fill="#f6465d"/>` + text(1157, 330, 37, "0.1462", "#fff", 'font-weight="600"');

// Buttons over the plot
svg += `<rect x="1074.500" y="423" width="21" height="21" rx="5" fill="#181a20" stroke="#2b3139"/>
<path d="M1078 432h3v6h-1.500z" fill="#f0b90b"/><path d="M1082 427h9v12h-9z" fill="#929aa5"/><path d="M1084 431h5M1084 434h5" stroke="#181a20"/>
<circle cx="1095.500" cy="422.500" r="4.600" fill="#fcd535"/>
<rect x="1116.500" y="530.500" width="21" height="21" rx="5" fill="#20242b" stroke="#3b424e"/>
<path d="M1122 536.500l4.500 4.500-4.500 4.500M1127.500 536.500l4.500 4.500-4.500 4.500" fill="none" stroke="#848e9c"/>
<rect x="357.500" y="509.500" width="11" height="31" rx="3" fill="#181a20" stroke="#333b47"/>
<path d="M361 521.500l3 3.500-3 3.500" fill="none" stroke="#848e9c"/>
<path d="M1182 566.500h14M1182 579.500h14M1189 568.500v9M1186.500 571l2.500-2.500 2.500 2.500M1186.500 575l2.500 2.500 2.500-2.500" fill="none" stroke="#848e9c"/>`;

document.getElementById("plot").innerHTML = svg;
```
